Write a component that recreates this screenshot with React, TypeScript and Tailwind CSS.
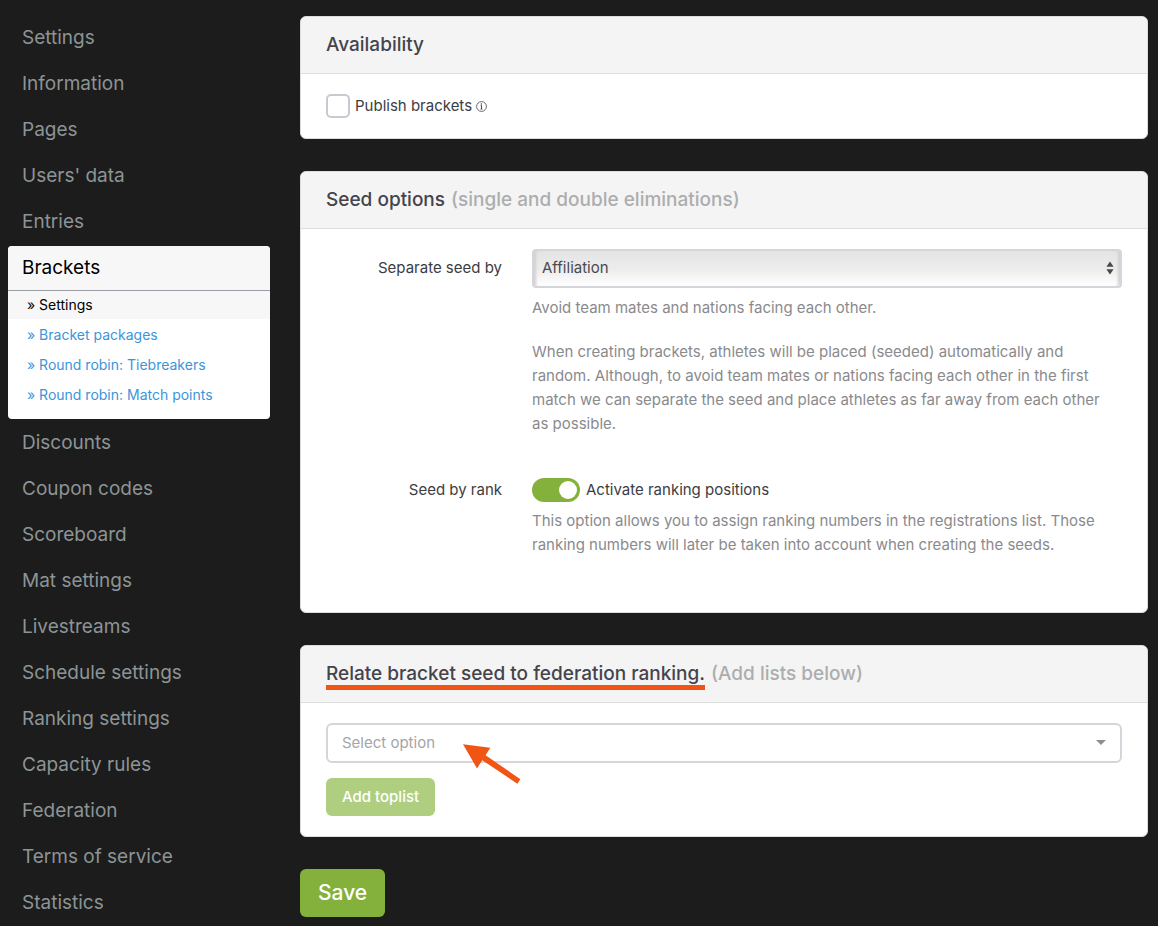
import React, { useState } from "react";

const itemsBefore = ["Settings", "Information", "Pages", "Users' data", "Entries"];
const subItems = ["Settings", "Bracket packages", "Round robin: Tiebreakers", "Round robin: Match points"];
const itemsAfter = [
  "Discounts",
  "Coupon codes",
  "Scoreboard",
  "Mat settings",
  "Livestreams",
  "Schedule settings",
  "Ranking settings",
  "Capacity rules",
  "Federation",
  "Terms of service",
  "Statistics",
];

function NavItem({ label }: { label: string }) {
  return (
    <li>
      <a href="#" className="flex h-[46px] items-center pt-[2px] pl-[14px] text-[19px] text-[#8c9496]">
        {label}
      </a>
    </li>
  );
}

function Sidebar() {
  return (
    <nav aria-label="Event" className="w-[262px] shrink-0">
      <ul>
        {itemsBefore.map((label) => (
          <NavItem key={label} label={label} />
        ))}
        <li className="mt-[2px] overflow-hidden rounded-[4px] bg-white pb-[10px]">
          <a
            href="#"
            className="flex h-[45px] items-center border-b border-[#9c9ca4] bg-[#f7f7f7] pl-[14px] text-[19px] text-black"
          >
            Brackets
          </a>
          <ul className="flex flex-col gap-[2px]">
            {subItems.map((label, i) => (
              <li key={label}>
                <a
                  href="#"
                  aria-current={i === 0 ? "page" : undefined}
                  className={
                    i === 0
                      ? "flex h-[28px] items-center bg-[#f7f7f7] pb-[2px] pl-[19px] text-[14px] text-black"
                      : "flex h-[28px] items-center pb-[2px] pl-[19px] text-[14px] text-[#3c94da]"
                  }
                >
                  » {label}
                </a>
              </li>
            ))}
          </ul>
        </li>
        {itemsAfter.map((label) => (
          <NavItem key={label} label={label} />
        ))}
      </ul>
    </nav>
  );
}

function Card({ title, children }: { title: React.ReactNode; children: React.ReactNode }) {
  return (
    <section className="overflow-hidden rounded-[6px] border border-[#dcdcde] bg-white">
      <h2 className="flex h-[57px] items-center gap-[6px] border-b border-[#dededf] bg-[#f4f4f4] px-[25px] text-[19px] font-medium text-[#44444b]">
        {title}
      </h2>
      {children}
    </section>
  );
}

function InfoIcon() {
  return (
    <svg viewBox="0 0 11 11" className="ml-[4px] h-[11px] w-[11px]" fill="none" stroke="#44444b" aria-hidden="true">
      <circle cx="5.5" cy="5.5" r="4.9" strokeWidth="0.8" />
      <circle cx="5.4" cy="2.9" r="0.75" fill="#44444b" stroke="none" />
      <path d="M5.5 4.4V8.2" strokeWidth="1" />
      <path d="M4.4 4.7H5.6M4.3 8.2H6.7" strokeWidth="0.6" />
    </svg>
  );
}

function Hint({ children }: { children: React.ReactNode }) {
  return <p className="text-[15px] leading-[24px] text-[#8a8a8d]">{children}</p>;
}

export default function App() {
  const [publish, setPublish] = useState(false);
  const [ranked, setRanked] = useState(true);

  return (
    <div className="flex min-h-screen gap-[30px] bg-[#1c1c1c] pt-[14px] pr-[10px] pl-[8px] font-['Inter','Liberation_Sans',sans-serif] text-[#3c3c43]">
      <Sidebar />
      <main className="flex min-w-0 flex-1 flex-col gap-[32px] pt-[2px]">
        <Card title="Availability">
          <div className="px-[25px] py-[20px]">
            <label className="flex h-[24px] items-center text-[15px]">
              <input
                type="checkbox"
                checked={publish}
                onChange={(e) => setPublish(e.target.checked)}
                className="mr-[5px] h-[24px] w-[24px] appearance-none rounded-[5px] border-2 border-[#c9c9d1] bg-white checked:bg-[#84b03c]"
              />
              Publish brackets
              <InfoIcon />
            </label>
          </div>
        </Card>

        <Card
          title={
            <>
              <span>Seed options</span>
              <span className="text-[#adadae]">(single and double eliminations)</span>
            </>
          }
        >
          <div className="grid grid-cols-[176px_minmax(0,1fr)] gap-x-[30px] px-[25px] pt-[20px] pb-[55px]">
            <label htmlFor="separate" className="flex h-[39px] items-center justify-end text-[15px]">
              Separate seed by
            </label>
            <div className="pb-[42px]">
              <div className="relative">
                <select
                  id="separate"
                  defaultValue="Affiliation"
                  className="block h-[39px] w-full appearance-none rounded-[4px] border-2 border-[#d5d5db] bg-linear-to-b from-[#e4e4e4] via-[#ececec] to-white px-[8px] text-[15px] text-[#4a4a4c] shadow-[inset_4px_0_3px_-2px_#d0d0d0,inset_-4px_0_3px_-2px_#d0d0d0]"
                >
                  <option>Affiliation</option>
                  <option>Nation</option>
                </select>
                <svg viewBox="0 0 8 14" className="pointer-events-none absolute top-[12px] right-[8px] h-[14px] w-[8px]" fill="#48484a" aria-hidden="true">
                  <path d="M4 0.5L7.6 5.8H0.4ZM4 13.5L7.6 8.2H0.4Z" />
                </svg>
              </div>
              <div className="flex flex-col gap-[20px] pt-[8px] pr-[12px]">
                <Hint>Avoid team mates and nations facing each other.</Hint>
                <Hint>
                  When creating brackets, athletes will be placed (seeded) automatically and random. Although, to avoid team
                  mates or nations facing each other in the first match we can separate the seed and place athletes as far
                  away from each other as possible.
                </Hint>
              </div>
            </div>

            <span className="flex h-[24px] items-center justify-end text-[15px]">Seed by rank</span>
            <div>
              <label className="flex h-[24px] items-center text-[15px]">
                <input
                  type="checkbox"
                  role="switch"
                  checked={ranked}
                  onChange={(e) => setRanked(e.target.checked)}
                  className="mr-[6px] flex h-[24px] w-[48px] appearance-none items-center rounded-full bg-[#b4b4b8] p-[3px] before:block before:h-[18px] before:w-[18px] before:rounded-full before:bg-white checked:justify-end checked:bg-[#84b03c]"
                />
                Activate ranking positions
              </label>
              <div className="pt-[7px] pr-[12px]">
                <Hint>
                  This option allows you to assign ranking numbers in the registrations list. Those ranking numbers will
                  later be taken into account when creating the seeds.
                </Hint>
              </div>
            </div>
          </div>
        </Card>

        <Card
          title={
            <>
              <span className="relative">
                Relate bracket seed to federation ranking.
                <span className="absolute inset-x-0 bottom-[-2px] h-[5px] bg-[#f05514]" />
              </span>
              <span className="text-[#adadae]">(Add lists below)</span>
            </>
          }
        >
          <div className="px-[25px] py-[20px]">
            <div className="relative">
              <select
                aria-label="Toplist"
                defaultValue=""
                className="block h-[40px] w-full appearance-none rounded-[6px] border-2 border-[#d5d5db] bg-white px-[14px] text-[15px] text-[#a5a5a7]"
              >
                <option value="">Select option</option>
              </select>
              <svg viewBox="0 0 10 5" className="pointer-events-none absolute top-[17px] right-[16px] h-[5px] w-[10px]" fill="#8f8f92" aria-hidden="true">
                <path d="M0 0H10L5 5Z" />
              </svg>
              <svg viewBox="0 0 58 40" className="pointer-events-none absolute top-[21px] left-[137px] h-[40px] w-[58px]" fill="#f05514" aria-hidden="true">
                <path d="M0 0.3L27.3 3.7L22.6 11.2L57.4 35.2L54.4 39.8L19.3 16.2L14 24.4Z" />
              </svg>
            </div>
            <button type="button" className="mt-[15px] block h-[38px] rounded-[6px] bg-[#afce80] px-[16px] text-[15px] font-medium text-white">
              Add toplist
            </button>
          </div>
        </Card>

        <button type="submit" className="h-[48px] self-start rounded-[6px] bg-[#84b03c] px-[18px] text-[21px] font-medium text-white">
          Save
        </button>
      </main>
    </div>
  );
}
